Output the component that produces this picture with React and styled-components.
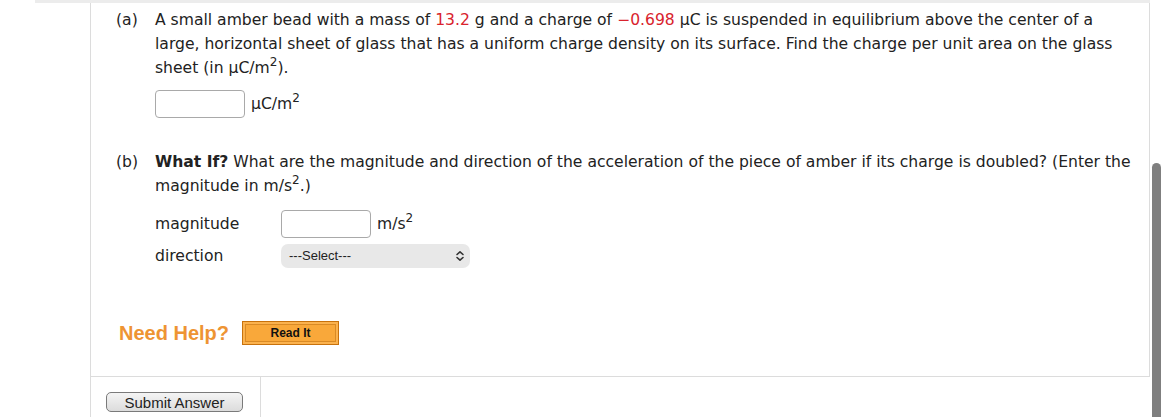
import React from "react";
import styled, { createGlobalStyle } from "styled-components";

const GlobalStyle = createGlobalStyle`
  html, body { margin: 0; padding: 0; background: #fff; }
  body { font-family: "DejaVu Sans", Verdana, sans-serif; color: #222; }
`;

const Page = styled.div`
  position: relative;
  width: 1170px;
  height: 417px;
  overflow: hidden;
  background: #fff;
`;

const TopStrip = styled.div`
  margin-left: 35px;
  width: 1115px;
  height: 3px;
  background: #ececec;
`;

const Card = styled.div`
  margin-left: 90px;
  width: 1060px;
  box-sizing: border-box;
  border-left: 1px solid #dcdcdc;
  border-right: 1px solid #dcdcdc;
  border-bottom: 1px solid #dcdcdc;
  padding: 5px 13px 31px 25px;
`;

const Part = styled.div`
  display: grid;
  grid-template-columns: 39px 1fr;
  margin-top: ${(p) => p.$top || 0}px;
  font-size: 15.6px;
  line-height: 24px;
`;

const PartLabel = styled.div``;

const Body = styled.div``;

const Red = styled.span`
  color: #d9232d;
`;

const Bold = styled.b`
  font-weight: bold;
`;

const Sup = styled.sup`
  font-size: 12px;
  line-height: 1;
  vertical-align: 7px;
`;

const AnswerRow = styled.div`
  display: flex;
  align-items: center;
  gap: 6px;
  margin-top: ${(p) => p.$top || 0}px;
`;

const FieldLabel = styled.div`
  width: 120px;
`;

const TextBox = styled.div`
  width: 90px;
  height: 28px;
  box-sizing: border-box;
  border: 1px solid #a9a9a9;
  border-radius: 4px;
  background: #fff;
`;

const Unit = styled.span``;

const Select = styled.div`
  width: 189px;
  height: 24px;
  box-sizing: border-box;
  border-radius: 7px;
  background: #e8e8e8;
  display: flex;
  align-items: center;
  justify-content: space-between;
  padding: 0 5px 0 8px;
  font-family: "Liberation Sans", Arial, sans-serif;
  font-size: 13px;
  color: #222;
`;

const HelpRow = styled.div`
  display: flex;
  align-items: center;
  gap: 13px;
  margin-top: 53px;
  padding-left: 3px;
`;

const NeedHelp = styled.span`
  font-family: "Liberation Sans", Arial, sans-serif;
  font-weight: bold;
  font-size: 20px;
  color: #ee9433;
`;

const ReadIt = styled.div`
  width: 97px;
  height: 24px;
  box-sizing: border-box;
  border: 1px solid #c8720c;
  background: #f9a83a;
  display: flex;
  align-items: center;
  justify-content: center;
  box-shadow: inset 0 0 0 2px #fbb24e, inset 0 0 0 3px #d98a25;
  font-family: "Liberation Sans", Arial, sans-serif;
  font-weight: bold;
  font-size: 12px;
  color: #111;
`;

const Footer = styled.div`
  margin-left: 90px;
  display: flex;
  height: 41px;
  border-left: 1px solid #dcdcdc;
`;

const SubmitCell = styled.div`
  width: 170px;
  border-right: 1px solid #dcdcdc;
  padding: 15px 0 0 15px;
  box-sizing: border-box;
`;

const SubmitButton = styled.div`
  width: 137px;
  height: 20px;
  box-sizing: border-box;
  border: 1px solid #7a7a7a;
  border-radius: 5px;
  background: linear-gradient(#f4f4f4, #dcdcdc);
  display: flex;
  align-items: center;
  justify-content: center;
  font-family: "Liberation Sans", Arial, sans-serif;
  font-size: 15px;
  color: #222;
`;

const Scrollbar = styled.div`
  position: absolute;
  left: 1152px;
  top: 163px;
  width: 9px;
  height: 260px;
  background: #7f7f7f;
  border-radius: 5px 5px 0 0;
`;

const Chevrons = () => (
  <svg width="10" height="12" viewBox="0 0 10 12" fill="none" stroke="#333" strokeWidth="1.6" strokeLinecap="round" strokeLinejoin="round">
    <path d="M2 4.5 L5 1.8 L8 4.5" />
    <path d="M2 7.5 L5 10.2 L8 7.5" />
  </svg>
);

export default function App() {
  return (
    <>
      <GlobalStyle />
      <Page>
        <TopStrip />
        <Card>
          <Part>
            <PartLabel>(a)</PartLabel>
            <Body>
              A small amber bead with a mass of <Red>13.2</Red> g and a charge of{" "}
              <Red>−0.698</Red> μC is suspended in equilibrium above the center of a
              large, horizontal sheet of glass that has a uniform charge density on its
              surface. Find the charge per unit area on the glass sheet (in μC/m<Sup>2</Sup>).
              <AnswerRow $top={10}>
                <TextBox />
                <Unit>
                  μC/m<Sup>2</Sup>
                </Unit>
              </AnswerRow>
            </Body>
          </Part>
          <Part $top={32}>
            <PartLabel>(b)</PartLabel>
            <Body>
              <Bold>What If?</Bold> What are the magnitude and direction of the acceleration
              of the piece of amber if its charge is doubled? (Enter the magnitude in m/s
              <Sup>2</Sup>.)
              <AnswerRow $top={12}>
                <FieldLabel>magnitude</FieldLabel>
                <TextBox />
                <Unit>
                  m/s<Sup>2</Sup>
                </Unit>
              </AnswerRow>
              <AnswerRow $top={6}>
                <FieldLabel>direction</FieldLabel>
                <Select>
                  <span>---Select---</span>
                  <Chevrons />
                </Select>
              </AnswerRow>
            </Body>
          </Part>
          <HelpRow>
            <NeedHelp>Need Help?</NeedHelp>
            <ReadIt>Read It</ReadIt>
          </HelpRow>
        </Card>
        <Footer>
          <SubmitCell>
            <SubmitButton>Submit Answer</SubmitButton>
          </SubmitCell>
        </Footer>
        <Scrollbar />
      </Page>
    </>
  );
}
